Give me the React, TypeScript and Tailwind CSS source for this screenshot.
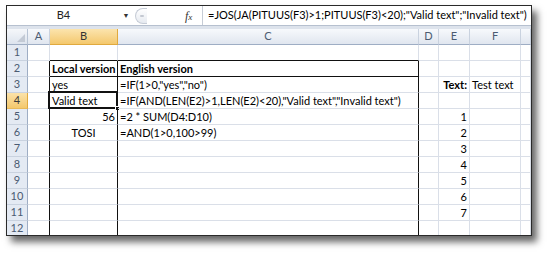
import React from "react";

type Cell = {
  text?: string;
  align?: "left" | "right" | "center";
  bold?: boolean;
};

const cols = ["A", "B", "C", "D", "E", "F", "G"];
const widths = ["w-[22px]", "w-[68px]", "w-[301px]", "w-[20px]", "w-[31px]", "w-[51px]", "flex-1"];

const data: Record<string, Cell> = {
  B2: { text: "Local version", bold: true },
  C2: { text: "English version", bold: true },
  B3: { text: "yes" },
  C3: { text: '=IF(1>0,"yes","no")' },
  E3: { text: "Text:", bold: true, align: "right" },
  F3: { text: "Test text" },
  B4: { text: "Valid text" },
  C4: { text: '=IF(AND(LEN(E2)>1,LEN(E2)<20),"Valid text","Invalid text")' },
  B5: { text: "56", align: "right" },
  C5: { text: "=2 * SUM(D4:D10)" },
  E5: { text: "1", align: "right" },
  B6: { text: "TOSI", align: "center" },
  C6: { text: "=AND(1>0,100>99)" },
  E6: { text: "2", align: "right" },
  E7: { text: "3", align: "right" },
  E8: { text: "4", align: "right" },
  E9: { text: "5", align: "right" },
  E10: { text: "6", align: "right" },
  E11: { text: "7", align: "right" },
};

function borderFor(col: string, row: number) {
  const inTable = row >= 2;
  let right = "border-r-[#dadfe8]";
  let bottom = "border-b-[#dadfe8]";
  if (inTable && (col === "A" || col === "B" || col === "C")) right = "border-r-[#111]";
  if ((row === 1 || row === 2) && (col === "B" || col === "C")) bottom = "border-b-[#111]";
  return `${right} ${bottom}`;
}

function Row({ row }: { row: number }) {
  const selected = row === 4;
  return (
    <div className="flex h-[16px] shrink-0">
      <div
        className={`flex w-[21px] shrink-0 items-center justify-center border-r border-b text-[11px] ${
          selected
            ? "border-r-[#e0a93e] border-b-[#e8b95a] bg-gradient-to-b from-[#fbe2a9] to-[#f4c86c] text-[#3b3b3b]"
            : "border-r-[#9eadc4] border-b-[#c9d2df] bg-[#e4eaf3] text-[#4b5b72]"
        }`}
      >
        {row}
      </div>
      {cols.map((c, i) => {
        const cell = data[`${c}${row}`];
        const align =
          cell?.align === "right" ? "justify-end" : cell?.align === "center" ? "justify-center" : "justify-start";
        return (
          <div
            key={c}
            className={`relative flex shrink-0 items-center border-r border-b px-[2px] text-[11px] leading-[14px] text-black ${widths[i]} ${align} ${borderFor(c, row)}`}
          >
            {cell?.text ? (
              <span className={`whitespace-nowrap ${cell.bold ? "font-bold" : ""}`}>{cell.text}</span>
            ) : null}
            {c === "B" && row === 4 ? (
              <div className="pointer-events-none absolute -left-[2px] -top-[2px] h-[18px] w-[70px] border-2 border-[#111]">
                <div className="absolute -bottom-[4px] -right-[4px] h-[5px] w-[5px] border border-white bg-[#111]" />
              </div>
            ) : null}
          </div>
        );
      })}
    </div>
  );
}

export default function App() {
  const rows = Array.from({ length: 12 }, (_, i) => i + 1);
  return (
    <div className="h-[254px] w-[550px] bg-white pl-[6px] pt-[5px]" style={{ fontFamily: "Lato, 'Liberation Sans', sans-serif" }}>
      <div className="flex h-[231px] w-[526px] flex-col overflow-hidden border border-[#2a2a2a] bg-white shadow-[5px_6px_7px_rgba(0,0,0,0.6)]">
        {/* formula bar */}
        <div className="flex h-[20px] shrink-0 items-center border-b border-[#b6c0cf] bg-white">
          <div className="flex w-[113px] shrink-0 justify-center text-[11px] text-[#222]">B4</div>
          <div className="ml-[1px] flex w-[10px] shrink-0 justify-center text-[7px] text-[#333]">▼</div>
          <div className="ml-[4px] flex h-[16px] w-[12px] shrink-0 items-center justify-center rounded-l-full border border-r-0 border-[#c6ccd6] bg-gradient-to-b from-white to-[#e6eaf0]">
            <div className="h-[2px] w-[4px] rounded-full bg-[#c4c9d2]" />
          </div>
          <div className="ml-[38px] w-[14px] shrink-0 text-[12px] italic text-[#333]" style={{ fontFamily: "'Liberation Serif', serif" }}>
            f<span className="text-[9px]">x</span>
          </div>
          <div className="ml-[3px] h-full shrink-0 border-l border-[#c6ccd6]" />
          <div className="shrink-0 whitespace-nowrap pl-[5px] text-[11px] text-black">
            =JOS(JA(PITUUS(F3)&gt;1;PITUUS(F3)&lt;20);"Valid text";"Invalid text")
          </div>
        </div>
        <div className="h-[3px] shrink-0 bg-[#dde3ec]" />
        {/* column headers */}
        <div className="flex h-[16px] shrink-0">
          <div className="relative w-[21px] shrink-0 border-r border-b border-r-[#b7c3d4] border-b-[#9eadc4] bg-gradient-to-b from-[#f5f7fa] to-[#dde4ee]">
            <div className="absolute bottom-[2px] right-[2px] h-0 w-0 border-b-[8px] border-l-[8px] border-b-[#c3cad5] border-l-transparent" />
          </div>
          {cols.map((c, i) => (
            <div
              key={c}
              className={`flex shrink-0 items-center justify-center border-r border-b text-[11px] ${widths[i]} ${
                c === "B"
                  ? "border-r-[#e0a93e] border-b-[#e0a93e] bg-gradient-to-b from-[#fbe4ad] to-[#f4c86c] text-[#333]"
                  : "border-r-[#c9d2df] border-b-[#9eadc4] bg-gradient-to-b from-[#f7f9fc] to-[#e0e6ef] text-[#4b5b72]"
              }`}
            >
              {c === "G" ? "" : c}
            </div>
          ))}
        </div>
        {rows.map((r) => (
          <Row key={r} row={r} />
        ))}
      </div>
    </div>
  );
}
